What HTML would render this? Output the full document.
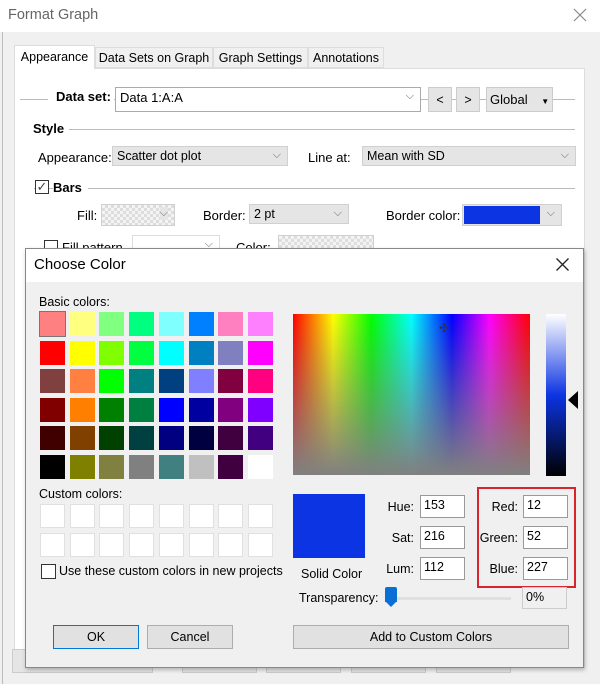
<!DOCTYPE html>
<html><head><meta charset="utf-8"><style>
*{margin:0;padding:0;box-sizing:border-box}
body{width:600px;height:684px;overflow:hidden;background:#f0f0f0;font-family:"Liberation Sans",sans-serif;font-size:12px;color:#000;position:relative}
.a{position:absolute}
.lbl{position:absolute;white-space:nowrap}
.combo{position:absolute;background:#e5e5e5;border:1px solid #d0d0d0;padding:2px 4px;font-size:12.5px}
.combo.w{background:#fff;border-color:#aaa}
.chev{position:absolute;right:6px;top:2px;color:#666;font-size:11px}
.btn{position:absolute;background:#e1e1e1;border:1px solid #adadad;text-align:center;font-size:12.5px}
.cell{position:absolute;width:25px;height:24px}
.cc{position:absolute;width:25px;height:24px;background:#fff;border:1px solid #e0e0e0}
.inp{position:absolute;background:#fff;border:1px solid #999;padding:2px 3px;font-size:12.5px}
.rl{position:absolute;text-align:right;font-size:12.5px}
.chk{position:absolute;width:14px;height:14px;border:1px solid #333;background:#fff}
.tab{position:absolute;top:47px;height:21px;background:#f0f0f0;border:1px solid #ddd;font-size:12.5px;text-align:center;padding-top:3px;white-space:nowrap}
</style></head><body>
<div class="a" style="left:0;top:0;width:600px;height:32px;background:#fff"></div>
<div class="a" style="left:2px;top:32px;width:1px;height:652px;background:#bbb"></div>
<div class="lbl" style="left:8px;top:7px;font-size:14.5px;color:#666">Format Graph</div>
<svg class="a" style="left:573px;top:8px" width="14" height="14"><path d="M1 1L13 13M13 1L1 13" stroke="#888" stroke-width="1.2"/></svg>
<!-- tab panel -->
<div class="a" style="left:14px;top:68px;width:571px;height:600px;background:#fff;border:1px solid #ddd"></div>
<div class="tab" style="left:14px;top:45px;width:81px;height:24px;background:#fff;border-bottom:none;padding-top:4px">Appearance</div>
<div class="tab" style="left:95px;width:118px">Data Sets on Graph</div>
<div class="tab" style="left:213px;width:95px">Graph Settings</div>
<div class="tab" style="left:308px;width:76px">Annotations</div>
<!-- data set row -->
<div class="a" style="left:20px;top:99px;width:555px;height:1px;background:#bbb"></div>
<div class="lbl" style="left:48px;top:89px;height:18px;background:#fff;padding:0 3px 0 8px;font-weight:bold;font-size:13px">Data set:</div>
<div class="combo w" style="left:115px;top:87px;width:306px;height:25px;font-size:13px">Data 1:A:A<span class="chev">⌵</span></div>
<div class="btn" style="left:428px;top:87px;width:24px;height:25px;padding-top:5px;background:#e5e5e5;border-color:#ccc">&lt;</div>
<div class="btn" style="left:456px;top:87px;width:24px;height:25px;padding-top:5px;background:#e5e5e5;border-color:#ccc">&gt;</div>
<div class="btn" style="left:486px;top:87px;width:67px;height:25px;padding:4px 0 0 3px;text-align:left;background:#e5e5e5;border-color:#ccc;font-size:13px">Global <span style="font-size:8px;margin-left:10px">▼</span></div>
<div class="a" style="left:34px;top:129px;width:541px;height:1px;background:#bbb"></div>
<div class="lbl" style="left:33px;top:121px;background:#fff;padding-right:5px;font-weight:bold;font-size:13px">Style</div>
<div class="lbl" style="left:38px;top:150px;font-size:13px">Appearance:</div>
<div class="combo" style="left:112px;top:146px;width:176px;height:20px">Scatter dot plot<span class="chev">⌵</span></div>
<div class="lbl" style="left:308px;top:150px;font-size:13px">Line at:</div>
<div class="combo" style="left:362px;top:146px;width:214px;height:20px">Mean with SD<span class="chev">⌵</span></div>
<div class="a" style="left:34px;top:188px;width:541px;height:1px;background:#bbb"></div>
<div class="chk" style="left:35px;top:180px;background:#fff;font-size:13px;line-height:12px;text-align:center;color:#444">✓</div>
<div class="lbl" style="left:53px;top:180px;background:#fff;padding-right:6px;font-weight:bold;font-size:13px">Bars</div>
<div class="lbl" style="left:77px;top:208px;font-size:13px">Fill:</div>
<div class="combo" style="left:101px;top:204px;width:74px;height:22px;background:repeating-conic-gradient(#ddd 0 25%,#f4f4f4 0 50%) 0 0/6px 6px"><span class="chev" style="background:#e5e5e5">⌵</span></div>
<div class="lbl" style="left:203px;top:208px;font-size:13px">Border:</div>
<div class="combo" style="left:249px;top:204px;width:100px;height:20px">2 pt<span class="chev">⌵</span></div>
<div class="lbl" style="left:386px;top:208px;font-size:13px">Border color:</div>
<div class="combo" style="left:462px;top:204px;width:100px;height:22px;background:#e5e5e5"><div class="a" style="left:1px;top:1px;width:76px;height:18px;background:#0c34e3"></div><span class="chev">⌵</span></div>
<div class="chk" style="left:44px;top:240px"></div>
<div class="lbl" style="left:62px;top:240px;font-size:13px">Fill pattern</div>
<div class="combo w" style="left:132px;top:235px;width:88px;height:20px;border-color:#ddd"><span class="chev">⌵</span></div>
<div class="lbl" style="left:236px;top:240px;font-size:13px">Color:</div>
<div class="combo" style="left:278px;top:235px;width:96px;height:20px;background:repeating-conic-gradient(#ddd 0 25%,#f4f4f4 0 50%) 0 0/6px 6px"></div>
<!-- behind buttons -->
<div class="btn" style="left:12px;top:649px;width:141px;height:24px;background:#e5e5e5;border-color:#ccc"></div>
<div class="btn" style="left:182px;top:649px;width:75px;height:24px;background:#e5e5e5;border-color:#ccc"></div>
<div class="btn" style="left:266px;top:649px;width:75px;height:24px;background:#e5e5e5;border-color:#ccc"></div>
<div class="btn" style="left:351px;top:649px;width:75px;height:24px;background:#e5e5e5;border-color:#ccc"></div>
<div class="btn" style="left:436px;top:649px;width:75px;height:24px;background:#e5e5e5;border-color:#ccc"></div>
<!-- Choose Color dialog -->
<div class="a" style="left:25px;top:248px;width:559px;height:420px;background:#f0f0f0;border:1px solid #888;box-shadow:1px 2px 4px rgba(0,0,0,.25)"></div>
<div class="a" style="left:26px;top:249px;width:557px;height:33px;background:#fff"></div>
<div class="lbl" style="left:34px;top:256px;font-size:15px">Choose Color</div>
<svg class="a" style="left:556px;top:258px" width="13" height="13"><path d="M0.5 0.5L12.5 12.5M12.5 0.5L0.5 12.5" stroke="#222" stroke-width="1.3"/></svg>
<div class="lbl" style="left:39px;top:295px;font-size:12.5px">Basic colors:</div>
<div id="grid"></div>
<div class="a" style="left:39px;top:311px;width:27px;height:26px;border:1px solid #777"></div>
<div class="lbl" style="left:39px;top:487px;font-size:12.5px">Custom colors:</div>
<div class="chk" style="left:41px;top:564px;width:15px;height:15px"></div>
<div class="lbl" style="left:59px;top:564px;font-size:12.5px">Use these custom colors in new projects</div>
<!-- spectrum -->
<div class="a" style="left:293px;top:314px;width:237px;height:161px;background:linear-gradient(to bottom,rgba(128,128,128,0),rgba(128,128,128,1)),linear-gradient(to right,#f00,#ff0 17%,#0f0 33%,#0ff 50%,#00f 67%,#f0f 83%,#f00)"></div>
<div class="lbl" style="left:439px;top:321px;font-size:12px;color:#333">✣</div>
<div class="a" style="left:546px;top:314px;width:20px;height:162px;background:linear-gradient(to bottom,#fff,#0c34e3 50%,#000)"></div>
<div class="a" style="left:568px;top:391px;width:0;height:0;border-top:9px solid transparent;border-bottom:9px solid transparent;border-right:10px solid #000"></div>
<div class="a" style="left:293px;top:494px;width:72px;height:64px;background:#0c34e3"></div>
<div class="lbl" style="left:301px;top:567px;font-size:12.5px">Solid Color</div>
<div class="rl" style="left:370px;top:500px;width:44px">Hue:</div>
<div class="rl" style="left:370px;top:531px;width:44px">Sat:</div>
<div class="rl" style="left:370px;top:562px;width:44px">Lum:</div>
<div class="inp" style="left:420px;top:495px;width:45px;height:23px">153</div>
<div class="inp" style="left:420px;top:526px;width:45px;height:23px">216</div>
<div class="inp" style="left:420px;top:557px;width:45px;height:23px">112</div>
<div class="a" style="left:477px;top:487px;width:99px;height:101px;border:2px solid #d9232e"></div>
<div class="rl" style="left:470px;top:500px;width:48px">Red:</div>
<div class="rl" style="left:470px;top:531px;width:48px">Green:</div>
<div class="rl" style="left:470px;top:562px;width:48px">Blue:</div>
<div class="inp" style="left:523px;top:495px;width:45px;height:23px">12</div>
<div class="inp" style="left:523px;top:526px;width:45px;height:23px">52</div>
<div class="inp" style="left:523px;top:557px;width:45px;height:23px">227</div>
<div class="lbl" style="left:299px;top:591px;font-size:12.5px">Transparency:</div>
<div class="a" style="left:388px;top:597px;width:123px;height:3px;background:#e0e0e0"></div>
<div class="a" style="left:385px;top:587px;width:12px;height:15px;background:#0a6fd4;border-radius:2px 2px 0 0"></div>
<div class="a" style="left:385px;top:601px;width:0;height:0;border-left:6px solid transparent;border-right:6px solid transparent;border-top:6px solid #0a6fd4"></div>
<div class="inp" style="left:522px;top:587px;width:45px;height:22px;background:#f0f0f0;border-color:#ccc">0%</div>
<div class="btn" style="left:293px;top:625px;width:276px;height:24px;padding-top:4px">Add to Custom Colors</div>
<div class="btn" style="left:53px;top:625px;width:86px;height:24px;padding-top:4px;border-color:#0078d7">OK</div>
<div class="btn" style="left:147px;top:625px;width:86px;height:24px;padding-top:4px">Cancel</div>
<script>
var c=[["#ff8080","#ffff80","#80ff80","#00ff80","#80ffff","#0080ff","#ff80c0","#ff80ff"],
["#ff0000","#ffff00","#80ff00","#00ff40","#00ffff","#0080c0","#8080c0","#ff00ff"],
["#804040","#ff8040","#00ff00","#008080","#004080","#8080ff","#800040","#ff0080"],
["#800000","#ff8000","#008000","#008040","#0000ff","#0000a0","#800080","#8000ff"],
["#400000","#804000","#004000","#004040","#000080","#000040","#400040","#400080"],
["#000000","#808000","#808040","#808080","#408080","#c0c0c0","#400040","#ffffff"]];
var h="";
for(var r=0;r<6;r++)for(var i=0;i<8;i++)h+='<div class="cell" style="left:'+(40+i*29.7)+'px;top:'+(312+r*28.5)+'px;background:'+c[r][i]+'"></div>';
for(var r=0;r<2;r++)for(var i=0;i<8;i++)h+='<div class="cc" style="left:'+(40+i*29.7)+'px;top:'+(504+r*29)+'px"></div>';
document.getElementById("grid").innerHTML=h;
</script>
</body></html>
